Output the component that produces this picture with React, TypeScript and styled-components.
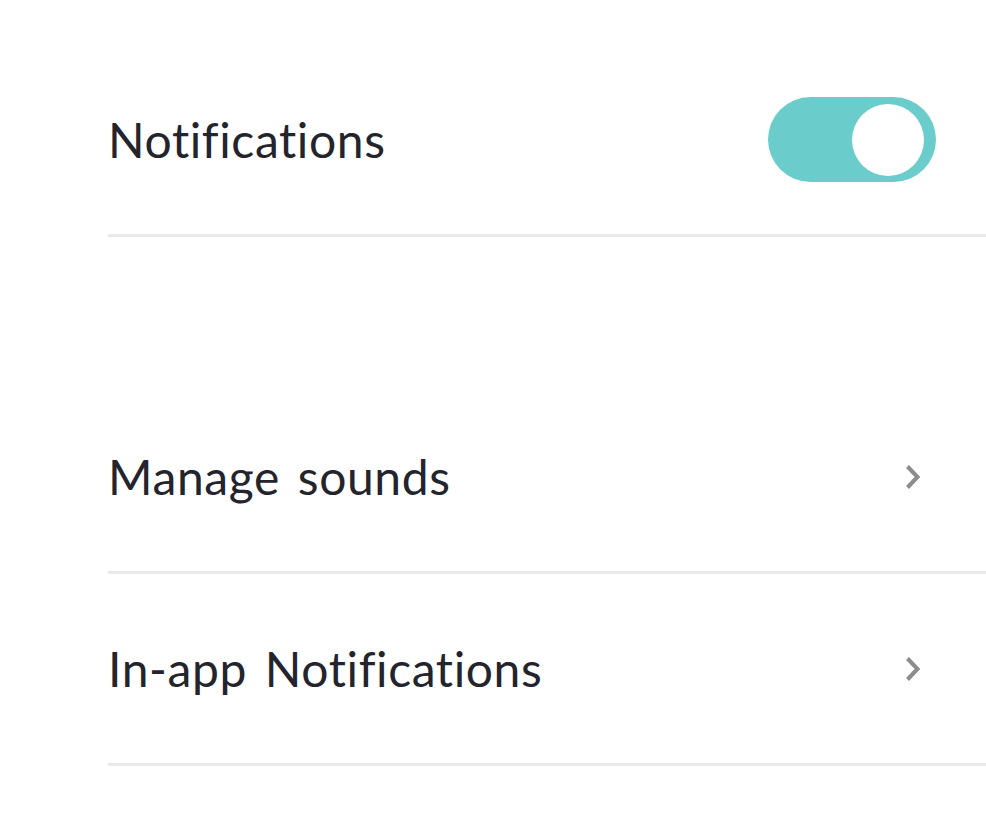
import React, { useState } from 'react';
import styled, { createGlobalStyle } from 'styled-components';

const GlobalStyle = createGlobalStyle`
  html, body {
    margin: 0;
    padding: 0;
    background: #ffffff;
  }
  body {
    font-family: 'Lato', 'Noto Sans', sans-serif;
    color: #24242c;
  }
`;

const Page = styled.div`
  padding: 45px 0 0 108px;
`;

const Section = styled.section<{ gap?: number }>`
  margin-top: ${({ gap }) => (gap ? `${gap}px` : '0')};
`;

const Row = styled.div<{ right: number }>`
  display: flex;
  align-items: center;
  justify-content: space-between;
  height: 189px;
  padding-right: ${({ right }) => right}px;
  border-bottom: 3px solid #e9e9eb;
  cursor: pointer;
`;

const Label = styled.span`
  font-size: 48px;
  font-weight: 400;
  letter-spacing: 0.6px;
  word-spacing: 5px;
`;

const Track = styled.button<{ on: boolean }>`
  position: relative;
  width: 168px;
  height: 85px;
  border: none;
  padding: 0;
  border-radius: 43px;
  background: ${({ on }) => (on ? '#6bcdcb' : '#e3e3e6')};
  cursor: pointer;
`;

const Knob = styled.span<{ on: boolean }>`
  position: absolute;
  top: 6.5px;
  left: ${({ on }) => (on ? '84px' : '12px')};
  width: 72px;
  height: 72px;
  border-radius: 50%;
  background: #ffffff;
  transition: left 0.2s;
`;

const Chevron = () => (
  <svg width="16" height="26" viewBox="0 0 16 26">
    <path d="M2.5 2.5 L12.5 13 L2.5 23.5" fill="none" stroke="#8b8b90" strokeWidth="4" />
  </svg>
);

export default function App() {
  const [on, setOn] = useState(true);

  return (
    <>
      <GlobalStyle />
      <Page>
        <Section>
          <Row right={50}>
            <Label>Notifications</Label>
            <Track on={on} onClick={() => setOn(!on)}>
              <Knob on={on} />
            </Track>
          </Row>
        </Section>
        <Section gap={145}>
          <Row right={65}>
            <Label>Manage sounds</Label>
            <Chevron />
          </Row>
          <Row right={65}>
            <Label>In-app Notifications</Label>
            <Chevron />
          </Row>
        </Section>
      </Page>
    </>
  );
}
